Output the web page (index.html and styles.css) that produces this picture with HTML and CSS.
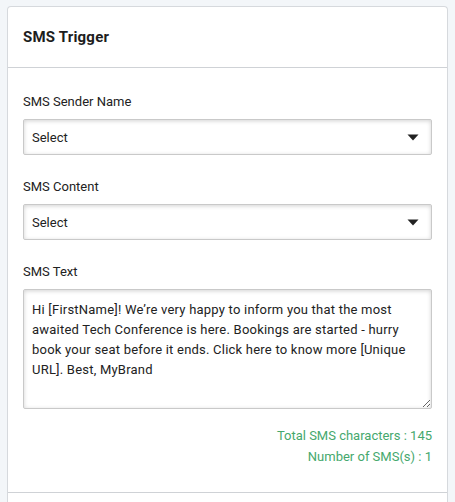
FILE: index.html
```html
<!DOCTYPE html>
<html lang="en">
<head>
<meta charset="utf-8">
<title>SMS Trigger</title>
<link rel="stylesheet" href="styles.css">
</head>
<body>
<div class="card">
  <div class="card-header">
    <h2 class="card-title">SMS Trigger</h2>
  </div>
  <div class="card-body">
    <div class="field">
      <label class="field-label">SMS Sender Name</label>
      <div class="select">
        <span class="select-value">Select</span>
        <svg class="select-arrow" width="12" height="7" viewBox="0 0 12 7"><path d="M0.5 0.5 H11.5 L6 6.5 Z" fill="#222"/></svg>
      </div>
    </div>
    <div class="field">
      <label class="field-label">SMS Content</label>
      <div class="select">
        <span class="select-value">Select</span>
        <svg class="select-arrow" width="12" height="7" viewBox="0 0 12 7"><path d="M0.5 0.5 H11.5 L6 6.5 Z" fill="#222"/></svg>
      </div>
    </div>
    <div class="field">
      <label class="field-label">SMS Text</label>
      <textarea class="textarea">Hi [FirstName]! We’re very happy to inform you that the most awaited Tech Conference is here. Bookings are started - hurry book your seat before it ends. Click here to know more [Unique URL]. Best, MyBrand</textarea>
    </div>
    <div class="counts">
      <div class="count">Total SMS characters : 145</div>
      <div class="count">Number of SMS(s) : 1</div>
    </div>
  </div>
  <div class="card-footer"></div>
</div>
</body>
</html>
```
FILE: styles.css
```css
html, body {
  margin: 0;
  padding: 0;
}
body {
  background: #f3f6f9;
  font-family: Roboto, "Liberation Sans", Arial, sans-serif;
  color: #222;
  padding: 6px 7px 0 7px;
  height: 502px;
  box-sizing: border-box;
  overflow: hidden;
}
.card {
  background: #fff;
  border: 1px solid #d6d9dd;
  border-bottom: none;
  border-radius: 4px 4px 0 0;
  height: 496px;
  box-sizing: border-box;
  overflow: hidden;
}
.card-header {
  height: 60px;
  border-bottom: 1px solid #cfd2d6;
  display: flex;
  align-items: center;
  padding: 0 15px;
}
.card-title {
  margin: 0;
  font-size: 15px;
  font-weight: 700;
  color: #1d1d1d;
  letter-spacing: 0.2px;
}
.card-body {
  padding: 25px 15px 0 15px;
  display: flex;
  flex-direction: column;
  height: 425px;
  box-sizing: border-box;
  border-bottom: 1px solid #cfd2d6;
}
.field {
  display: flex;
  flex-direction: column;
  margin-bottom: 23px;
}
.field-label {
  font-size: 13px;
  line-height: 18px;
  color: #222;
  margin-bottom: 8px;
}
.select {
  height: 36px;
  box-sizing: border-box;
  border: 1px solid #c9c9c9;
  border-radius: 2px;
  box-shadow: inset 0 1px 4px rgba(0,0,0,0.18);
  display: flex;
  align-items: center;
  justify-content: space-between;
  padding: 0 12px 0 8px;
  background: #fff;
}
.select-value {
  font-size: 13px;
  color: #222;
}
.select-arrow {
  display: block;
}
.textarea {
  height: 120px;
  box-sizing: border-box;
  border: 1px solid #c9c9c9;
  border-radius: 2px;
  box-shadow: inset 0 1px 4px rgba(0,0,0,0.18);
  padding: 10px 8px;
  font-family: Roboto, "Liberation Sans", Arial, sans-serif;
  font-size: 13px;
  line-height: 20px;
  letter-spacing: 0.22px;
  color: #222;
  resize: vertical;
  margin: 0;
}
.counts {
  margin-top: -7px;
  display: flex;
  flex-direction: column;
  align-items: flex-end;
}
.count {
  font-size: 13px;
  line-height: 21px;
  color: #45a86d;
}
```
